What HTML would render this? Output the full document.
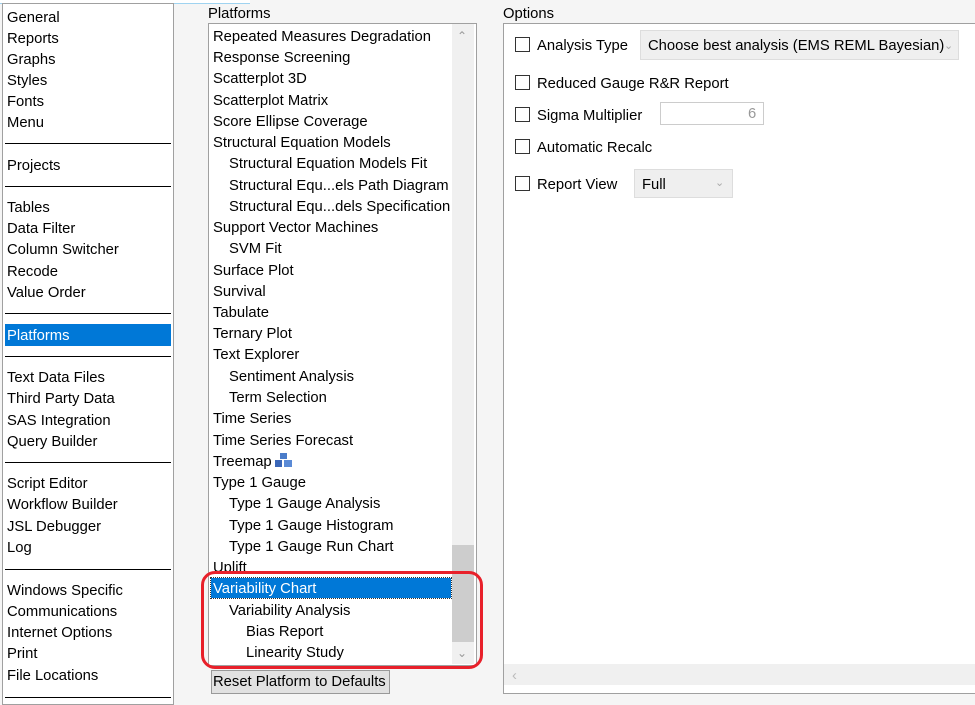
<!DOCTYPE html>
<html><head><style>
body{margin:0;width:975px;height:700px;background:#f5f5f5;position:relative;overflow:hidden;font-family:"Liberation Sans",sans-serif;font-size:14.8px;color:#000}
.a{position:absolute;white-space:nowrap;line-height:20px;margin-top:1px}
.sep{position:absolute;left:5px;width:166px;height:1px;background:#000}
.cb{position:absolute;width:13px;height:13px;border:1px solid #333;background:#fff}
</style></head><body>
<div style="position:absolute;left:0;top:0;width:250px;height:3px;border-bottom:1px solid #9fd3f0;background:#fff"></div>
<div style="position:absolute;left:2px;top:3px;width:170px;height:700px;background:#fff;border:1px solid #a0a0a0"></div>
<div style="position:absolute;left:5px;top:324px;width:166px;height:22px;background:#0078d7"></div>
<div class="sep" style="top:143px"></div><div class="sep" style="top:186px"></div><div class="sep" style="top:313px"></div><div class="sep" style="top:356px"></div><div class="sep" style="top:462px"></div><div class="sep" style="top:569px"></div><div class="sep" style="top:697px"></div>
<div class="a" style="left:7px;top:7px">General</div>
<div class="a" style="left:7px;top:28px">Reports</div>
<div class="a" style="left:7px;top:49px">Graphs</div>
<div class="a" style="left:7px;top:70px">Styles</div>
<div class="a" style="left:7px;top:91px">Fonts</div>
<div class="a" style="left:7px;top:112px">Menu</div>
<div class="a" style="left:7px;top:155px">Projects</div>
<div class="a" style="left:7px;top:197px">Tables</div>
<div class="a" style="left:7px;top:218px">Data Filter</div>
<div class="a" style="left:7px;top:239px">Column Switcher</div>
<div class="a" style="left:7px;top:261px">Recode</div>
<div class="a" style="left:7px;top:282px">Value Order</div>
<div class="a" style="left:7px;top:325px;color:#fff">Platforms</div>
<div class="a" style="left:7px;top:367px">Text Data Files</div>
<div class="a" style="left:7px;top:388px">Third Party Data</div>
<div class="a" style="left:7px;top:410px">SAS Integration</div>
<div class="a" style="left:7px;top:431px">Query Builder</div>
<div class="a" style="left:7px;top:473px">Script Editor</div>
<div class="a" style="left:7px;top:494px">Workflow Builder</div>
<div class="a" style="left:7px;top:516px">JSL Debugger</div>
<div class="a" style="left:7px;top:537px">Log</div>
<div class="a" style="left:7px;top:580px">Windows Specific</div>
<div class="a" style="left:7px;top:601px">Communications</div>
<div class="a" style="left:7px;top:622px">Internet Options</div>
<div class="a" style="left:7px;top:643px">Print</div>
<div class="a" style="left:7px;top:665px">File Locations</div>

<div class="a" style="left:208px;top:3px">Platforms</div>
<div style="position:absolute;left:208px;top:23px;width:267px;height:641px;background:#fff;border:1px solid #a0a0a0"></div>
<div style="position:absolute;left:452px;top:24px;width:22px;height:640px;background:#f0f0f0"></div>
<div style="position:absolute;left:452px;top:545px;width:22px;height:97px;background:#cdcdcd"></div>
<div class="a" style="left:457px;top:25px;color:#999;font-size:12px">&#8963;</div>
<div class="a" style="left:457px;top:642px;color:#999;font-size:12px">&#8964;</div>
<div style="position:absolute;left:211px;top:578px;width:240px;height:20px;background:#0078d7;outline:1px dotted #333"></div>
<div class="a" style="left:213px;top:26px">Repeated Measures Degradation</div>
<div class="a" style="left:213px;top:47px">Response Screening</div>
<div class="a" style="left:213px;top:68px">Scatterplot 3D</div>
<div class="a" style="left:213px;top:90px">Scatterplot Matrix</div>
<div class="a" style="left:213px;top:111px">Score Ellipse Coverage</div>
<div class="a" style="left:213px;top:132px">Structural Equation Models</div>
<div class="a" style="left:229px;top:153px">Structural Equation Models Fit</div>
<div class="a" style="left:229px;top:175px">Structural Equ...els Path Diagram</div>
<div class="a" style="left:229px;top:196px">Structural Equ...dels Specification</div>
<div class="a" style="left:213px;top:217px">Support Vector Machines</div>
<div class="a" style="left:229px;top:238px">SVM Fit</div>
<div class="a" style="left:213px;top:260px">Surface Plot</div>
<div class="a" style="left:213px;top:281px">Survival</div>
<div class="a" style="left:213px;top:302px">Tabulate</div>
<div class="a" style="left:213px;top:323px">Ternary Plot</div>
<div class="a" style="left:213px;top:344px">Text Explorer</div>
<div class="a" style="left:229px;top:366px">Sentiment Analysis</div>
<div class="a" style="left:229px;top:387px">Term Selection</div>
<div class="a" style="left:213px;top:408px">Time Series</div>
<div class="a" style="left:213px;top:430px">Time Series Forecast</div>
<div class="a" style="left:213px;top:451px">Treemap</div>
<svg style="position:absolute;left:274px;top:452px" width="20" height="17"><rect x="6" y="1" width="7" height="6" fill="#4a7cc9"/><rect x="1" y="8" width="7" height="7" fill="#3a66b8"/><rect x="10" y="8" width="8" height="7" fill="#5a8ad6"/></svg>
<div class="a" style="left:213px;top:472px">Type 1 Gauge</div>
<div class="a" style="left:229px;top:493px">Type 1 Gauge Analysis</div>
<div class="a" style="left:229px;top:515px">Type 1 Gauge Histogram</div>
<div class="a" style="left:229px;top:536px">Type 1 Gauge Run Chart</div>
<div class="a" style="left:213px;top:557px;height:14px;overflow:hidden">Uplift</div>
<div class="a" style="left:213px;top:578px;color:#fff">Variability Chart</div>
<div class="a" style="left:229px;top:600px">Variability Analysis</div>
<div class="a" style="left:246px;top:621px">Bias Report</div>
<div class="a" style="left:246px;top:642px">Linearity Study</div>
<div style="position:absolute;left:201px;top:571px;width:276px;height:92px;border:3px solid #e8202a;border-radius:14px"></div>
<div style="position:absolute;left:211px;top:670px;width:177px;height:22px;background:#e1e1e1;border:1px solid #999"></div>
<div class="a" style="left:213px;top:671px">Reset Platform to Defaults</div>

<div class="a" style="left:503px;top:3px">Options</div>
<div style="position:absolute;left:503px;top:23px;width:480px;height:669px;background:#fff;border:1px solid #a0a0a0"></div>
<div style="position:absolute;left:504px;top:664px;width:471px;height:21px;background:#f0f0f0"></div>
<div class="a" style="left:512px;top:665px;color:#bbb">&#8249;</div>
<div class="cb" style="left:515px;top:37px"></div><div class="a" style="left:537px;top:35px">Analysis Type</div>
<div style="position:absolute;left:640px;top:30px;width:317px;height:28px;background:#efefef;border:1px solid #ddd"></div>
<div class="a" style="left:648px;top:35px">Choose best analysis (EMS REML Bayesian)</div>
<div class="a" style="left:944px;top:35px;color:#aaa;font-size:11px">&#8964;</div>
<div class="cb" style="left:515px;top:75px"></div><div class="a" style="left:537px;top:73px">Reduced Gauge R&amp;R Report</div>
<div class="cb" style="left:515px;top:107px"></div><div class="a" style="left:537px;top:105px">Sigma Multiplier</div>
<div style="position:absolute;left:660px;top:102px;width:102px;height:21px;background:#fff;border:1px solid #ccc"></div>
<div class="a" style="left:748px;top:103px;color:#999">6</div>
<div class="cb" style="left:515px;top:139px"></div><div class="a" style="left:537px;top:137px">Automatic Recalc</div>
<div class="cb" style="left:515px;top:176px"></div><div class="a" style="left:537px;top:174px">Report View</div>
<div style="position:absolute;left:634px;top:169px;width:97px;height:27px;background:#efefef;border:1px solid #ddd"></div>
<div class="a" style="left:642px;top:174px">Full</div>
<div class="a" style="left:715px;top:172px;color:#aaa;font-size:11px">&#8964;</div>
</body></html>
